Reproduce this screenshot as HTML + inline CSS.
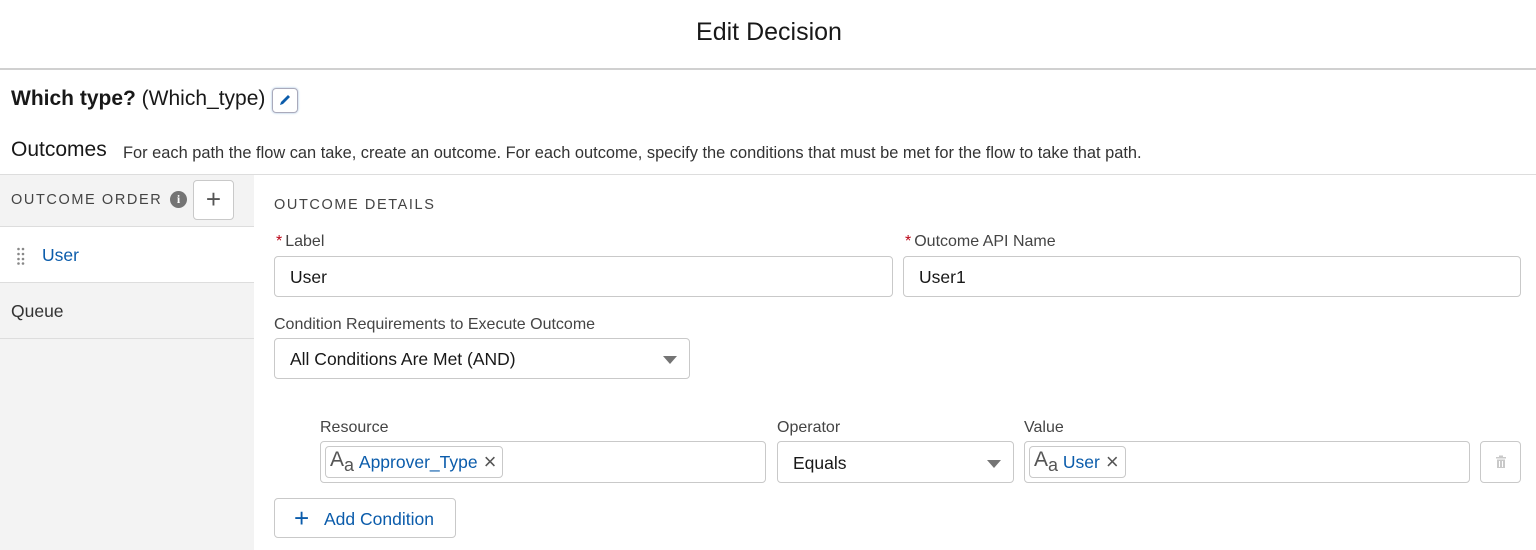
<!DOCTYPE html>
<html><head><meta charset="utf-8"><style>
*{box-sizing:border-box;margin:0;padding:0}
body{width:1536px;height:550px;overflow:hidden;background:#fff;font-family:"Liberation Sans",Arial,sans-serif;color:#181818;position:relative}
.a{position:absolute;white-space:nowrap}
.box{position:absolute;border:1px solid #c9c9c9;border-radius:4px;background:#fff}
.lbl{font-size:16px;color:#444}
.req{color:#ba0517;margin-right:3px}
.val{font-size:17.5px;color:#181818}
.pill{position:absolute;border:1px solid #c9c9c9;border-radius:4px;height:32px;top:4px;left:4px;display:flex;align-items:center;padding:0 6px 0 4px;font-size:17.5px;color:#0b5cab}
.caret{position:absolute;width:0;height:0;border-left:7px solid transparent;border-right:7px solid transparent;border-top:8px solid #747474}
</style></head><body>
<div class="a" style="left:1px;width:1536px;text-align:center;top:18px;font-size:25px">Edit Decision</div>
<div class="a" style="left:0;top:68px;width:1536px;height:2px;background:#d0d0d0"></div>

<div class="a" style="left:11px;top:87px;font-size:21px"><b>Which type?</b> (Which_type)</div>
<div class="a" style="left:272px;top:88px;width:26px;height:25px;border:1px solid #aab;border-radius:4px;box-shadow:0 0 2px #9bd"><svg width="24" height="23" viewBox="0 0 24 23"><path d="M7 16 L8 13 L15 6 L17 8 L10 15 Z" fill="#0b5cab"/></svg></div>

<div class="a" style="left:11px;top:138px;font-size:21px">Outcomes</div>
<div class="a" style="left:123px;top:144px;font-size:16.4px;color:#333">For each path the flow can take, create an outcome. For each outcome, specify the conditions that must be met for the flow to take that path.</div>
<div class="a" style="left:0;top:174px;width:1536px;height:1px;background:#ddd"></div>

<div class="a" style="left:0;top:175px;width:254px;height:375px;background:#f3f3f3"></div>
<div class="a" style="left:11px;top:192px;font-size:14.5px;letter-spacing:1.6px;color:#444">OUTCOME ORDER</div>
<div class="a" style="left:170px;top:191px;width:17px;height:17px;border-radius:50%;background:#747474;color:#fff;font-size:12px;font-weight:bold;text-align:center;line-height:17px;font-family:'Liberation Serif',serif">i</div>
<div class="a" style="left:193px;top:180px;width:41px;height:40px;border:1px solid #c9c9c9;border-radius:4px;background:#fff;font-size:26px;text-align:center;line-height:36px;color:#555">+</div>
<div class="a" style="left:0;top:226px;width:254px;height:57px;background:#fff;border-top:1px solid #ddd;border-bottom:1px solid #ddd"></div>
<svg class="a" style="left:17px;top:247px" width="8" height="18" viewBox="0 0 8 18"><g fill="#888"><circle cx="1.5" cy="2" r="1.3"/><circle cx="6" cy="2" r="1.3"/><circle cx="1.5" cy="7" r="1.3"/><circle cx="6" cy="7" r="1.3"/><circle cx="1.5" cy="12" r="1.3"/><circle cx="6" cy="12" r="1.3"/><circle cx="1.5" cy="16.5" r="1.3"/><circle cx="6" cy="16.5" r="1.3"/></g></svg>
<div class="a" style="left:42px;top:245px;font-size:17.5px;color:#0b5cab">User</div>
<div class="a" style="left:11px;top:301px;font-size:17.5px;color:#333">Queue</div>
<div class="a" style="left:0;top:338px;width:254px;height:1px;background:#ddd"></div>

<div class="a" style="left:274px;top:197px;font-size:14.5px;letter-spacing:1.6px;color:#444">OUTCOME DETAILS</div>
<div class="a lbl" style="left:276px;top:233px"><span class="req">*</span>Label</div>
<div class="box" style="left:274px;top:256px;width:619px;height:41px"><span class="a val" style="left:15px;top:10px">User</span></div>
<div class="a lbl" style="left:905px;top:233px"><span class="req">*</span>Outcome API Name</div>
<div class="box" style="left:903px;top:256px;width:618px;height:41px"><span class="a val" style="left:15px;top:10px">User1</span></div>

<div class="a lbl" style="left:274px;top:316px">Condition Requirements to Execute Outcome</div>
<div class="box" style="left:274px;top:338px;width:416px;height:41px"><span class="a val" style="left:15px;top:10px">All Conditions Are Met (AND)</span><span class="caret" style="left:388px;top:17px"></span></div>

<div class="a lbl" style="left:320px;top:419px">Resource</div>
<div class="box" style="left:320px;top:441px;width:446px;height:42px"><div class="pill"><span style="color:#555;font-size:21px">A<sub style="font-size:18px">a</sub></span>&nbsp;Approver_Type <span style="color:#555;font-size:22px;margin-left:6px">×</span></div></div>
<div class="a lbl" style="left:777px;top:419px">Operator</div>
<div class="box" style="left:777px;top:441px;width:237px;height:42px"><span class="a val" style="left:15px;top:11px">Equals</span><span class="caret" style="left:209px;top:18px"></span></div>
<div class="a lbl" style="left:1024px;top:419px">Value</div>
<div class="box" style="left:1024px;top:441px;width:446px;height:42px"><div class="pill"><span style="color:#555;font-size:21px">A<sub style="font-size:18px">a</sub></span>&nbsp;User <span style="color:#555;font-size:22px;margin-left:6px">×</span></div></div>
<div class="box" style="left:1480px;top:441px;width:41px;height:42px"><svg class="a" style="left:12px;top:12px" width="16" height="16" viewBox="0 0 16 16"><rect x="3" y="3" width="10" height="1.5" fill="#c9c9c9"/><rect x="6" y="1.5" width="4" height="1.5" fill="#c9c9c9"/><rect x="4" y="5.5" width="8" height="8.5" fill="#c9c9c9"/><rect x="6" y="7" width="1" height="6" fill="#fff"/><rect x="9" y="7" width="1" height="6" fill="#fff"/></svg></div>

<div class="box" style="left:274px;top:498px;width:182px;height:40px"><span class="a" style="left:19px;top:4px;font-size:26px;color:#0b5cab">+</span><span class="a" style="left:49px;top:10px;font-size:17.5px;color:#0b5cab">Add Condition</span></div>
</body></html>
